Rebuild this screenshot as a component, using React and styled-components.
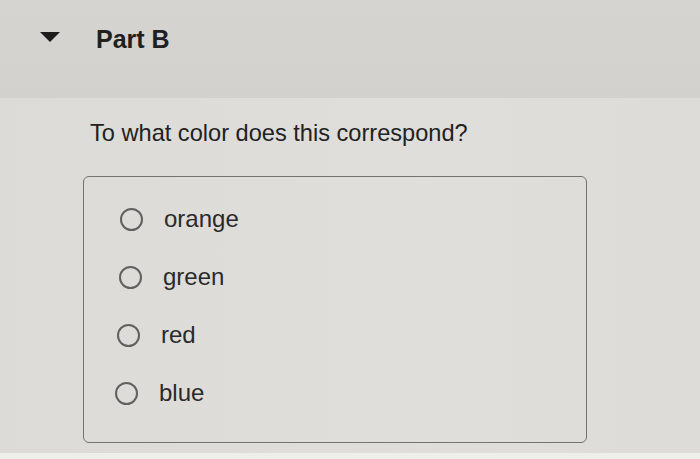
import React from "react";
import styled, { createGlobalStyle } from "styled-components";

const GlobalStyle = createGlobalStyle`
  html, body {
    margin: 0;
    padding: 0;
    background: #eeeeeb;
  }
  body {
    font-family: "Liberation Sans", Arial, sans-serif;
    width: 700px;
    height: 459px;
    overflow: hidden;
  }
`;

const Page = styled.div`
  display: flex;
  flex-direction: column;
  width: 700px;
  height: 459px;
`;

const Header = styled.div`
  height: 98px;
  display: flex;
  align-items: flex-start;
  padding: 25px 0 0 40px;
  box-sizing: border-box;
  background: linear-gradient(180deg, #d5d4d1 0%, #d2d1ce 100%);
`;

const Caret = styled.span`
  width: 0;
  height: 0;
  margin-top: 7px;
  border-left: 10px solid transparent;
  border-right: 10px solid transparent;
  border-top: 10px solid #1c1c1c;
`;

const Title = styled.h2`
  margin: 0 0 0 36px;
  font-size: 25px;
  line-height: 28px;
  font-weight: 700;
  color: #202020;
`;

const Main = styled.div`
  height: 355px;
  box-sizing: border-box;
  padding: 21px 0 0 83px;
  background: linear-gradient(90deg, #dcdbd7 0%, #dfdeda 60%, #dddcd8 100%);
`;

const Question = styled.p`
  margin: 0 0 29px 7px;
  font-size: 23.6px;
  line-height: 28px;
  color: #222;
`;

const Choices = styled.div`
  width: 504px;
  height: 267px;
  box-sizing: border-box;
  border: 1.5px solid #747371;
  border-radius: 6px;
  padding: 13px 0 0 36px;
  display: flex;
  flex-direction: column;
`;

const Choice = styled.label`
  height: 58px;
  display: flex;
  align-items: center;
  gap: 21px;
  margin-left: ${(p) => p.$shift}px;
  font-size: 24px;
  color: #2a2a2a;
`;

const Radio = styled.span`
  width: 23px;
  height: 23px;
  box-sizing: border-box;
  border: 2px solid #606060;
  border-radius: 50%;
`;

const options = ["orange", "green", "red", "blue"];
const shifts = [0, -1, -3, -5];

export default function App() {
  return (
    <Page>
      <GlobalStyle />
      <Header>
        <Caret />
        <Title>Part B</Title>
      </Header>
      <Main>
        <Question>To what color does this correspond?</Question>
        <Choices>
          {options.map((o, i) => (
            <Choice key={o} $shift={shifts[i]}>
              <Radio />
              {o}
            </Choice>
          ))}
        </Choices>
      </Main>
    </Page>
  );
}
